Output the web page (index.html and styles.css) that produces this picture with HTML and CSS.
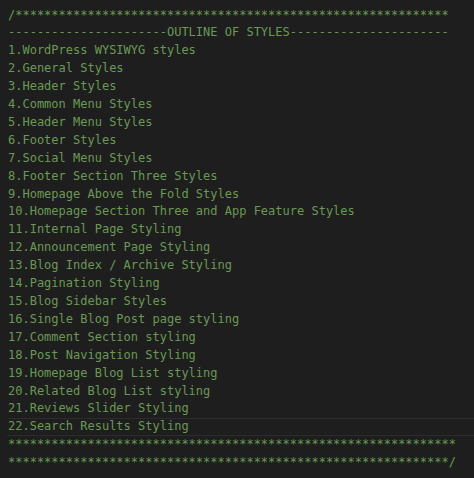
FILE: index.html
```html
<!DOCTYPE html>
<html>
<head>
<meta charset="utf-8">
<link rel="stylesheet" href="styles.css">
</head>
<body>
<div class="editor">
<div class="line">/************************************************************</div>
<div class="line">----------------------OUTLINE OF STYLES----------------------</div>
<div class="line">1.WordPress WYSIWYG styles</div>
<div class="line">2.General Styles</div>
<div class="line">3.Header Styles</div>
<div class="line">4.Common Menu Styles</div>
<div class="line">5.Header Menu Styles</div>
<div class="line">6.Footer Styles</div>
<div class="line">7.Social Menu Styles</div>
<div class="line">8.Footer Section Three Styles</div>
<div class="line">9.Homepage Above the Fold Styles</div>
<div class="line">10.Homepage Section Three and App Feature Styles</div>
<div class="line">11.Internal Page Styling</div>
<div class="line">12.Announcement Page Styling</div>
<div class="line">13.Blog Index / Archive Styling</div>
<div class="line">14.Pagination Styling</div>
<div class="line">15.Blog Sidebar Styles</div>
<div class="line">16.Single Blog Post page styling</div>
<div class="line">17.Comment Section styling</div>
<div class="line">18.Post Navigation Styling</div>
<div class="line">19.Homepage Blog List styling</div>
<div class="line">20.Related Blog List styling</div>
<div class="line">21.Reviews Slider Styling</div>
<div class="line current">22.Search Results Styling</div>
<div class="line">**************************************************************</div>
<div class="line">*************************************************************/</div>
</div>
</body>
</html>
```
FILE: styles.css
```css
html, body {
  margin: 0;
  padding: 0;
  background: #1e1e1e;
  height: 100%;
  overflow: hidden;
}
.editor {
  padding-top: 6.5px;
  font-family: "DejaVu Sans Mono", monospace;
  font-size: 12px;
  color: #6a9955;
}
.line {
  height: 17.92px;
  line-height: 17.92px;
  padding-left: 8px;
  white-space: pre;
  box-sizing: border-box;
}
.current {
  margin-left: 7px;
  padding-left: 1px;
  border-top: 1px solid #2c2c2c;
  border-bottom: 1px solid #2c2c2c;
  line-height: 15.92px;
}
```
